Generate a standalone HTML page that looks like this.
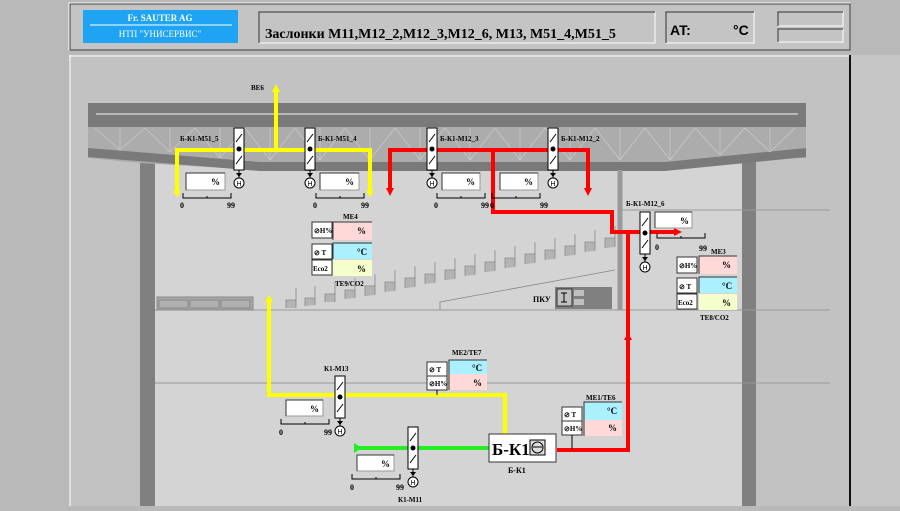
<!DOCTYPE html>
<html><head><meta charset="utf-8"><style>
body{margin:0;width:900px;height:506px;overflow:hidden;background:#b9b9b9;font-family:"Liberation Serif",serif}
svg text{font-family:"Liberation Serif",serif;font-weight:bold}
.s{font-family:"Liberation Sans",sans-serif;font-weight:normal}
</style></head><body>
<svg width="900" height="506" viewBox="0 0 900 506" xmlns="http://www.w3.org/2000/svg">
<defs>
<g id="dmp">
<rect x="-5" y="0" width="10" height="42" fill="#fff" stroke="#000"/>
<line x1="-3" y1="14" x2="3" y2="6" stroke="#000"/><line x1="-3" y1="36" x2="3" y2="28" stroke="#000"/>
<circle cx="0" cy="21" r="2.5" fill="#000"/>
<line x1="0" y1="42" x2="0" y2="50" stroke="#000"/><path d="M-3,45 L3,45 L0,49Z"/>
<circle cx="0" cy="55" r="5" fill="#fff" stroke="#000"/>
<text x="0" y="58" font-size="7" text-anchor="middle" class="s">H</text>
</g>
<g id="sc">
<path d="M0,-5 V0 H48 V-5 M24,0 v-2" fill="none" stroke="#000"/>
</g>
</defs>
<!-- header -->
<rect x="69" y="3" width="781" height="47" fill="#c4c4c4" stroke="#fff"/>
<rect x="70" y="4" width="780" height="46" fill="none" stroke="#404040" stroke-width="1"/>
<rect x="83" y="10" width="155" height="33" fill="#1ea4f2"/>
<text x="160" y="21" font-size="9" fill="#fff" text-anchor="middle">Fr. SAUTER  AG</text>
<line x1="90" y1="25" x2="232" y2="25" stroke="#fff"/>
<text x="160" y="37" font-size="9" fill="#fff" text-anchor="middle" style="font-weight:normal">НТП "УНИСЕРВИС"</text>
<rect x="259" y="12" width="396" height="31" fill="#c4c4c4" stroke="#fff"/>
<path d="M259,43 V12 H655" fill="none" stroke="#333"/>
<text x="265" y="38" font-size="14">Заслонки М11,М12_2,М12_3,М12_6, М13, М51_4,М51_5</text>
<rect x="666" y="12" width="88" height="31" fill="#c4c4c4" stroke="#fff"/>
<path d="M666,43 V12 H754" fill="none" stroke="#333"/>
<text x="670" y="35" font-size="14" class="s" style="font-weight:bold">AT:</text>
<text x="733" y="35" font-size="14" class="s" style="font-weight:bold">°C</text>
<rect x="778" y="12" width="65" height="14" fill="#c4c4c4" stroke="#fff"/><path d="M778,26 V12 H843" fill="none" stroke="#333"/>
<rect x="778" y="29" width="65" height="13" fill="#c4c4c4" stroke="#fff"/><path d="M778,42 V29 H843" fill="none" stroke="#333"/>
<!-- main panel -->
<rect x="69" y="55" width="781" height="451" fill="#c2c2c2"/>
<line x1="69" y1="56" x2="850" y2="56" stroke="#fff"/>
<line x1="70" y1="55" x2="70" y2="506" stroke="#fff"/>
<line x1="850" y1="55" x2="850" y2="506" stroke="#111" stroke-width="2"/>
<rect x="851" y="55" width="49" height="451" fill="#c6c6c6"/>
<!-- interior -->
<rect x="155" y="160" width="587" height="346" fill="#d4d4d4"/>
<rect x="140" y="155" width="15" height="351" fill="#808080"/>
<rect x="742" y="155" width="14" height="351" fill="#808080"/>
<!-- roof -->
<polygon points="88,103 806,103 806,158 742,158 665,170 260,170 140,163 88,158" fill="#acacac"/>
<rect x="88" y="103" width="718" height="24" fill="#7a7a7a"/>
<line x1="96" y1="114" x2="798" y2="114" stroke="#b8b8b8" stroke-width="2"/>
<polygon points="88,148 260,162 665,162 806,148 806,157 665,171 260,171 88,157" fill="#7a7a7a"/>
<g stroke="#c8c8c8" stroke-width="0.8" fill="none">
<path d="M95,128 L120,150 L145,128 L170,152 L195,128 L220,158 L245,128 L270,160 L295,128 L320,160 L345,128 L370,160 L395,128 L420,160 L445,128 L470,160 L495,128 L520,160 L545,128 L570,160 L595,128 L620,160 L645,128 L670,160 L695,128 L720,155 L745,128 L770,152 L795,128"/>
<path d="M120,128 v22 M170,128 v24 M220,128 v30 M270,128 v32 M320,128 v32 M370,128 v32 M420,128 v32 M470,128 v32 M520,128 v32 M570,128 v32 M620,128 v32 M670,128 v32 M720,128 v27 M770,128 v22"/>
</g>
<line x1="620" y1="170" x2="620" y2="310" stroke="#999" stroke-width="5"/>
<line x1="155" y1="310" x2="830" y2="310" stroke="#999"/>
<line x1="622" y1="210" x2="830" y2="210" stroke="#999"/>
<line x1="155" y1="383" x2="830" y2="383" stroke="#999"/>
<!-- stairs -->
<g fill="#b0b0b0" stroke="#888">
<rect x="157" y="297" width="96" height="13" fill="#a8a8a8"/>
<rect x="159" y="300" width="29" height="8"/><rect x="190" y="300" width="29" height="8"/><rect x="221" y="300" width="29" height="8"/>
</g>
<g fill="#b4b4b4" stroke="#888" stroke-width="0.8">
<path d="M286,308 V300 H296 V308 M305,306 V298 H315 V305 M325,302 V294 H335 V302 M345,299 V290 H355 V298 M365,296 V286 H375 V295 M385,292 V282 H395 V291 M405,288 V278 H415 V287 M425,284 V274 H435 V283 M445,280 V270 H455 V279 M465,276 V266 H475 V275 M485,272 V262 H495 V271 M505,268 V258 H515 V267 M525,264 V254 H535 V263 M545,260 V250 H555 V259 M565,256 V246 H575 V255 M585,252 V242 H595 V251 M605,248 V238 H615 V247"/>
<path d="M296,300 v-12 M315,298 v-12 M335,294 v-12 M355,290 v-12 M375,286 v-12 M395,282 v-12 M415,278 v-12 M435,274 v-12 M455,270 v-12 M475,266 v-12 M495,262 v-12 M515,258 v-12 M535,254 v-12 M555,250 v-12 M575,246 v-12 M595,242 v-12 M615,238 v-12" fill="none"/>
<path d="M440,310 V302 L615,270" fill="none"/>
</g>
<text x="533" y="302" font-size="8">ПКУ</text>
<rect x="555" y="287" width="57" height="22" fill="#808080"/>
<rect x="557" y="289" width="15" height="17" fill="#c0c0c0" stroke="#333"/>
<path d="M561,293 h6 M564,293 v9 M561,302 h6" stroke="#000"/>
<rect x="574" y="290" width="10" height="6" fill="#c0c0c0"/><rect x="574" y="299" width="10" height="6" fill="#c0c0c0"/>
<!-- yellow -->
<g stroke="#ffff00" stroke-width="4" fill="none">
<path d="M177,193 V150 H370 V193"/><path d="M276,150 V90"/>
<path d="M269,300 V395 H505 V435"/>
</g>
<path d="M272,92 L276,84 L280,92Z M173,191 L177,197 L181,191Z M366,191 L370,197 L374,191Z M265,302 L269,295 L273,302Z" fill="#ffff00"/>
<text x="251" y="90" font-size="7">ВЕ6</text>
<!-- red -->
<g stroke="#ff0000" stroke-width="4" fill="none">
<path d="M390,190 V150 H588 V190"/><path d="M493,150 V212 H612 V232 H675"/>
<path d="M628,232 V450 H557"/>
</g>
<path d="M386,188 L390,196 L394,188Z M584,188 L588,196 L592,188Z M674,228 L682,232 L674,236Z M624,340 L628,333 L632,340Z" fill="#ff0000"/>
<!-- green -->
<line x1="358" y1="448" x2="490" y2="448" stroke="#22ee22" stroke-width="4"/>
<path d="M354,443 L362,448 L354,453Z" fill="#22ee22"/>
<!-- dampers -->
<use href="#dmp" x="239" y="128"/><use href="#dmp" x="310" y="128"/>
<use href="#dmp" x="432" y="128"/><use href="#dmp" x="553" y="128"/>
<use href="#dmp" x="645" y="212"/><use href="#dmp" x="340" y="376"/><use href="#dmp" x="413" y="427"/>
<g font-size="7">
<text x="180" y="141">Б-К1-М51_5</text><text x="318" y="141">Б-К1-М51_4</text>
<text x="440" y="141">Б-К1-М12_3</text><text x="561" y="141">Б-К1-М12_2</text>
<text x="626" y="206">Б-К1-М12_6</text><text x="324" y="371">К1-М13</text><text x="398" y="502">К1-М11</text>
</g>
<!-- percent boxes -->
<g fill="#fff" stroke="#999">
<rect x="186" y="173" width="39" height="17"/><rect x="320" y="173" width="39" height="17"/>
<rect x="442" y="173" width="38" height="17"/><rect x="500" y="173" width="38" height="17"/>
<rect x="655" y="212" width="37" height="16"/><rect x="286" y="400" width="37" height="16"/><rect x="357" y="455" width="37" height="16"/>
</g>
<path d="M186,190 V173 H225 M320,190 V173 H359 M442,190 V173 H480 M500,190 V173 H538 M655,228 V212 H692 M286,416 V400 H323 M357,471 V455 H394" fill="none" stroke="#333"/>
<g font-size="9">
<text x="211" y="185">%</text><text x="345" y="185">%</text><text x="466" y="185">%</text><text x="524" y="185">%</text>
<text x="680" y="224">%</text><text x="310" y="412">%</text><text x="381" y="467">%</text>
</g>
<use href="#sc" x="183" y="198"/><use href="#sc" x="316" y="198"/><use href="#sc" x="437" y="198"/><use href="#sc" x="492" y="198"/>
<use href="#sc" x="657" y="238"/><use href="#sc" x="281" y="424"/><use href="#sc" x="352" y="479"/>
<g font-size="8" class="s">
<text x="180" y="208">0</text><text x="227" y="208">99</text><text x="313" y="208">0</text><text x="361" y="208">99</text>
<text x="434" y="208">0</text><text x="481" y="208">99</text><text x="490" y="208">0</text><text x="540" y="208">99</text>
<text x="655" y="250">0</text><text x="699" y="251">99</text><text x="279" y="435">0</text><text x="324" y="435">99</text>
<text x="350" y="490">0</text><text x="396" y="490">99</text>
</g>
<!-- sensor panels -->
<g stroke="#333" fill="#fff">
<rect x="312" y="222" width="20" height="16"/><rect x="312" y="244" width="20" height="15"/><rect x="312" y="260" width="20" height="15"/>
<rect x="677" y="257" width="20" height="16"/><rect x="677" y="278" width="20" height="15"/><rect x="677" y="294" width="20" height="15"/>
<rect x="427" y="362" width="20" height="14"/><rect x="427" y="376" width="20" height="14"/>
<rect x="562" y="407" width="20" height="14"/><rect x="562" y="421" width="20" height="14"/>
</g>
<g stroke="none">
<rect x="333" y="222" width="39" height="18" fill="#ffd8d8"/><rect x="333" y="243" width="39" height="16" fill="#aaf0ff"/><rect x="333" y="260" width="39" height="16" fill="#f4ffcc"/>
<rect x="699" y="256" width="38" height="18" fill="#ffd8d8"/><rect x="699" y="277" width="38" height="16" fill="#aaf0ff"/><rect x="699" y="294" width="38" height="16" fill="#f4ffcc"/>
<rect x="449" y="360" width="38" height="14" fill="#aaf0ff"/><rect x="449" y="374" width="38" height="16" fill="#ffd8d8"/>
<rect x="584" y="402" width="38" height="18" fill="#aaf0ff"/><rect x="584" y="420" width="38" height="16" fill="#ffd8d8"/>
</g>
<path d="M333,240 V222 H372 M333,259 V243 H372 M699,274 V256 H737 M699,293 V277 H737 M449,374 V360 H487 M449,390 V374 M584,420 V402 H622 M584,436 V420" fill="none" stroke="#333"/>
<line x1="437" y1="390" x2="437" y2="395" stroke="#000"/><line x1="572" y1="435" x2="572" y2="450" stroke="#000"/>
<g font-size="7" class="s">
<text x="314" y="233">⊘H%</text><text x="314" y="255">⊘ T</text><text x="313" y="271">Eco2</text>
<text x="679" y="268">⊘H%</text><text x="679" y="289">⊘ T</text><text x="678" y="305">Eco2</text>
<text x="429" y="372">⊘ T</text><text x="429" y="386">⊘H%</text>
<text x="564" y="417">⊘ T</text><text x="564" y="431">⊘H%</text>
</g>
<g font-size="9">
<text x="357" y="234">%</text><text x="357" y="255">°C</text><text x="357" y="272">%</text>
<text x="722" y="268">%</text><text x="722" y="289">°C</text><text x="722" y="306">%</text>
<text x="472" y="371">°C</text><text x="473" y="386">%</text>
<text x="607" y="414">°C</text><text x="608" y="431">%</text>
</g>
<g font-size="7">
<text x="343" y="219">МЕ4</text><text x="335" y="286">ТЕ9/СО2</text>
<text x="711" y="254">МЕ3</text><text x="700" y="320">ТЕ8/СО2</text>
<text x="452" y="355">МЕ2/ТЕ7</text><text x="586" y="400">МЕ1/ТЕ6</text>
</g>
<!-- Б-К1 -->
<rect x="489" y="434" width="67" height="28" fill="#fff" stroke="#333"/>
<text x="492" y="455" font-size="17">Б-К1</text>
<rect x="530" y="440" width="15" height="15" fill="#ddd" stroke="#000"/><circle cx="537.5" cy="447.5" r="5.5" fill="none" stroke="#000"/>
<path d="M533,447 h9" stroke="#000"/>
<text x="508" y="473" font-size="8">Б-К1</text>
</svg>
</body></html>
